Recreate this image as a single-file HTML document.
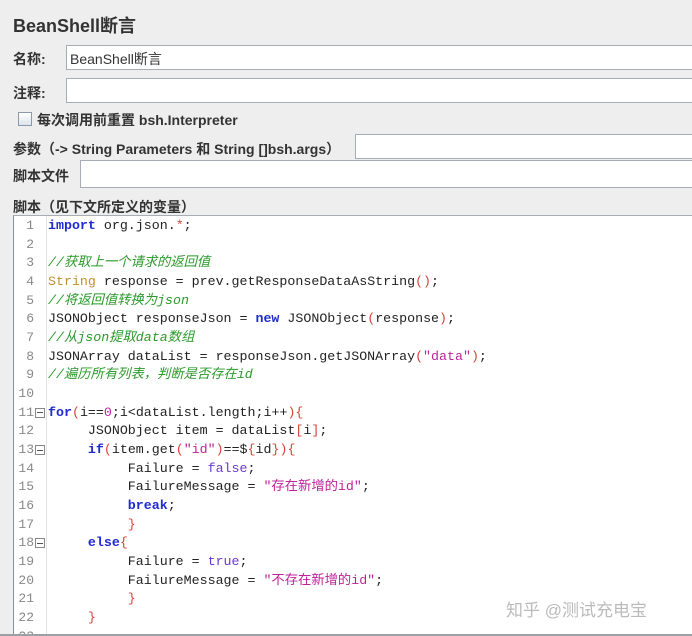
<!DOCTYPE html>
<html><head><meta charset="utf-8"><style>
body{margin:0;width:692px;height:636px;background:#eeeeee;position:relative;overflow:hidden;font-family:"Liberation Sans","Noto Sans CJK SC",sans-serif;color:#333}
.a{position:absolute}
.lbl{font-size:14px;font-weight:bold;color:#333}
.fld{position:absolute;background:#fff;border:1px solid #a8adb3;border-right:none;right:0}
#ed{position:absolute;left:13px;top:215px;right:0;bottom:2px;background:#fff;border-left:1px solid #8a9096;border-top:1px solid #a8adb3;overflow:hidden}
#gut{position:absolute;left:0;top:0;width:32px;bottom:0;border-right:1px solid #e3e3e3;background:#fff}
.ln{position:absolute;left:0;width:20px;text-align:right;font:13px/18px "Liberation Mono",monospace;color:#888;height:18px}
.fb{position:absolute;left:21px;width:8px;height:8px;border:1px solid #888;font-size:0}
.fb:after{content:"";position:absolute;left:1px;top:3.5px;width:6px;height:1px;background:#555}
.c{position:absolute;left:34px;white-space:pre;font:13.3px/18px "Liberation Mono","Noto Sans CJK SC",monospace;color:#222;height:18px}
.c span{line-height:18px}
.k{color:#1f2ad0;font-weight:bold}.s{color:#c0219a}.m{color:#2a9a2a;font-style:italic}.p{color:#d8423a}.t{color:#c09030}
</style></head><body>
<div class="a" style="left:13px;top:12px;font-size:18px;font-weight:bold;color:#333">BeanShell断言</div>
<div class="a lbl" style="left:13px;top:49px">名称:</div>
<div class="fld" style="left:66px;top:45px;height:23px"><span style="position:absolute;left:3px;top:3px;font-size:14px;color:#333">BeanShell断言</span></div>
<div class="a lbl" style="left:13px;top:83px">注释:</div>
<div class="fld" style="left:66px;top:78px;height:23px"></div>
<div class="a" style="left:18px;top:112px;width:12px;height:12px;border:1px solid #8a9aaa;background:linear-gradient(#fff,#dde4ec)"></div>
<div class="a lbl" style="left:37px;top:110px">每次调用前重置 bsh.Interpreter</div>
<div class="a lbl" style="left:13px;top:139px">参数（-&gt; String Parameters 和 String []bsh.args）</div>
<div class="fld" style="left:355px;top:134px;height:23px"></div>
<div class="a lbl" style="left:13px;top:166px">脚本文件</div>
<div class="fld" style="left:80px;top:160px;height:26px"></div>
<div class="a lbl" style="left:13px;top:197px">脚本（见下文所定义的变量）</div>
<div id="ed"><div id="gut"></div>
<div id="lines"></div>
</div>
<div class="a" style="left:506px;top:596px;font-size:17px;color:#bbb">知乎 @测试充电宝</div>
<div class="a" style="left:0;right:0;bottom:0;height:2px;background:#9aa0a6"></div>
<script>
var L=[
'<span class="k">import</span> org.json.<span class="p">*</span>;',
'',
'<span class="m">//获取上一个请求的返回值</span>',
'<span class="t">String</span> response = prev.getResponseDataAsString<span class="p">()</span>;',
'<span class="m">//将返回值转换为json</span>',
'JSONObject responseJson = <span class="k">new</span> JSONObject<span class="p">(</span>response<span class="p">)</span>;',
'<span class="m">//从json提取data数组</span>',
'JSONArray dataList = responseJson.getJSONArray<span class="p">(</span><span class="s">"data"</span><span class="p">)</span>;',
'<span class="m">//遍历所有列表，判断是否存在id</span>',
'',
'<span class="k">for</span><span class="p">(</span>i==<span class="s">0</span>;i&lt;dataList.length;i++<span class="p">){</span>',
'     JSONObject item = dataList<span class="p">[</span>i<span class="p">]</span>;',
'     <span class="k">if</span><span class="p">(</span>item.get<span class="p">(</span><span class="s">"id"</span><span class="p">)</span>==$<span class="p">{</span>id<span class="p">}){</span>',
'          Failure = <span class="k" style="color:#6a3ad0;font-weight:normal">false</span>;',
'          FailureMessage = <span class="s">"存在新增的id"</span>;',
'          <span class="k">break</span>;',
'          <span class="p">}</span>',
'     <span class="k">else</span><span class="p">{</span>',
'          Failure = <span class="k" style="color:#6a3ad0;font-weight:normal">true</span>;',
'          FailureMessage = <span class="s">"不存在新增的id"</span>;',
'          <span class="p">}</span>',
'     <span class="p">}</span>',
''];
var h='';
for(var i=0;i<L.length;i++){var y=1+i*18.67;
h+='<div class="ln" style="top:'+y+'px">'+(i+1)+'</div><div class="c" style="top:'+y+'px">'+L[i]+'</div>';
if(i==10||i==12||i==17)h+='<div class="fb" style="top:'+(y+4)+'px"></div>';}
document.getElementById('lines').innerHTML=h;
</script>
</body></html>
